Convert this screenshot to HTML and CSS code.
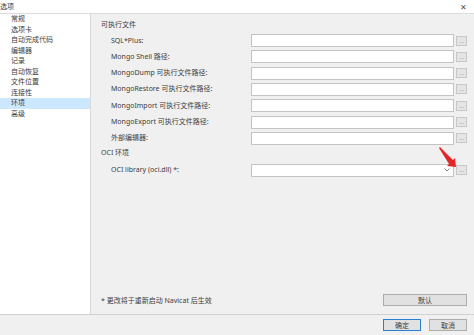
FILE: index.html
```html
<!DOCTYPE html>
<html lang="zh-CN">
<head>
  <meta charset="UTF-8">
  <title>选项</title>
  <link rel="stylesheet" href="styles.css">
</head>
<body>
  <div class="window">
    <!-- Title bar -->
    <div class="titlebar">
      <span class="title">选项</span>
      <span class="close">✕</span>
    </div>

    <div class="main">
      <!-- Category list -->
      <ul class="sidebar">
        <li>常规</li>
        <li>选项卡</li>
        <li>自动完成代码</li>
        <li>编辑器</li>
        <li>记录</li>
        <li>自动恢复</li>
        <li>文件位置</li>
        <li>连接性</li>
        <li class="active">环境</li>
        <li>高级</li>
      </ul>

      <!-- Settings page -->
      <div class="content">
        <div class="group-title">可执行文件</div>
        <div class="rows">
          <label>SQL*Plus:</label><div class="field"></div><button class="dots">...</button>
          <label>Mongo Shell 路径:</label><div class="field"></div><button class="dots">...</button>
          <label>MongoDump 可执行文件路径:</label><div class="field"></div><button class="dots">...</button>
          <label>MongoRestore 可执行文件路径:</label><div class="field"></div><button class="dots">...</button>
          <label>MongoImport 可执行文件路径:</label><div class="field"></div><button class="dots">...</button>
          <label>MongoExport 可执行文件路径:</label><div class="field"></div><button class="dots">...</button>
          <label>外部编辑器:</label><div class="field"></div><button class="dots">...</button>
        </div>

        <div class="group-title oci">OCI 环境</div>
        <div class="rows oci-rows">
          <label>OCI library (oci.dll) *:</label>
          <div class="field combo">
            <svg class="chevron" width="6" height="4" viewBox="0 0 6 4"><path d="M0.5 0.5 L3 3 L5.5 0.5" fill="none" stroke="#666" stroke-width="0.8"/></svg>
          </div>
          <button class="dots">...</button>
        </div>

        <div class="bottom">
          <span class="note">* 更改将于重新启动 Navicat 后生效</span>
          <button class="btn wide">默认</button>
        </div>
      </div>
    </div>

    <!-- Dialog buttons -->
    <div class="footer">
      <button class="btn primary">确定</button>
      <button class="btn">取消</button>
    </div>

    <!-- Red annotation arrow -->
    <svg class="arrow" width="24" height="24" viewBox="0 0 24 24">
      <polygon points="1,1 2,0 15,13 17,11 18,20 9,19 11,17" fill="#e3262a"/>
    </svg>
  </div>
</body>
</html>
```

FILE: styles.css
```css
/* General styles */
body {
  margin: 0;
  font-family: "Noto Sans", "Noto Sans CJK SC", sans-serif;
  font-size: 7px;
  color: #3c3c3c;
  background-color: #f0f0f0;
}

.window {
  position: relative;
  display: flex;
  flex-direction: column;
  width: 474px;
  height: 335px;
  overflow: hidden;
}

/* Title bar */
.titlebar {
  height: 13px;
  background-color: #fff;
  border-bottom: 1px solid #dcdcdc;
  display: flex;
  justify-content: space-between;
  align-items: center;
  line-height: 10px;
}

.close {
  margin-right: 7px;
  font-size: 8px;
  color: #555;
}

.main {
  flex: 1;
  display: flex;
  min-height: 0;
}

/* Category list */
.sidebar {
  list-style: none;
  margin: 0;
  padding: 0;
  width: 90px;
  background-color: #fff;
  border-right: 1px solid #d9d9d9;
}

.sidebar li {
  height: 10.5px;
  line-height: 10.5px;
  padding-left: 11px;
}

.sidebar li.active {
  background-color: #cce8ff;
}

/* Settings page */
.content {
  flex: 1;
  display: flex;
  flex-direction: column;
  padding: 6px 7px 8px 10px;
}

.group-title {
  line-height: 10px;
}

.group-title.oci {
  margin-top: 3px;
}

.rows {
  display: grid;
  grid-template-columns: 138px 1fr 11px;
  grid-auto-rows: 13px;
  column-gap: 2px;
  row-gap: 3.33px;
  align-items: center;
  margin-top: 4px;
  padding-left: 10px;
}

.rows label {
  line-height: 10px;
  white-space: nowrap;
}

.oci-rows {
  margin-top: 6px;
}

.rows .field {
  grid-column: 2;
  height: 13px;
  box-sizing: border-box;
  background-color: #fff;
  border: 1px solid #c4c4c4;
}

.combo {
  display: flex;
  justify-content: flex-end;
  align-items: center;
  padding-right: 3px;
}

.dots {
  width: 11px;
  height: 10px;
  padding: 0;
  margin: 0;
  font-size: 6px;
  line-height: 6px;
  color: #777;
  background-color: #e4e4e4;
  border: 1px solid #c8c8c8;
  font-family: "Liberation Sans", sans-serif;
}

/* Footnote and default button */
.bottom {
  margin-top: auto;
  display: flex;
  justify-content: space-between;
  align-items: center;
}

.btn {
  height: 12px;
  width: 38px;
  padding: 0;
  font-family: inherit;
  font-size: 7px;
  line-height: 9px;
  color: #3c3c3c;
  background-color: #e1e1e1;
  border: 1px solid #adadad;
}

.btn.wide {
  width: 84px;
}

.btn.primary {
  border-color: #2a7fd4;
}

/* Dialog buttons */
.footer {
  height: 20px;
  border-top: 1px solid #d0d0d0;
  display: flex;
  justify-content: flex-end;
  align-items: center;
  gap: 8px;
  padding-right: 7px;
}

/* Red annotation arrow */
.arrow {
  position: absolute;
  left: 438px;
  top: 147px;
}
```
